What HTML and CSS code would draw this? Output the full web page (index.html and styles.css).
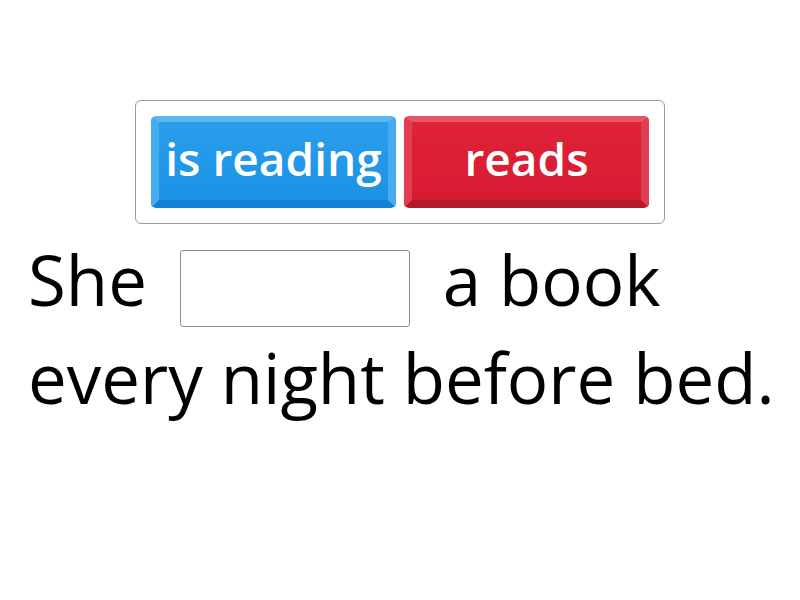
FILE: index.html
```html
<!DOCTYPE html>
<html lang="en">
<head>
<meta charset="utf-8">
<title>Fill in the gap</title>
<link rel="stylesheet" href="styles.css">
</head>
<body>
<main class="quiz">
  <div class="choices">
    <button class="tile tile-blue">is reading</button>
    <button class="tile tile-red">reads</button>
  </div>
  <p class="sentence">She <span class="gap"></span> a book every night before bed.</p>
</main>
</body>
</html>
```

FILE: styles.css
```css
html, body {
  margin: 0;
  padding: 0;
  background: #ffffff;
}

body {
  width: 800px;
  height: 600px;
  overflow: hidden;
  font-family: "Open Sans", "Noto Sans", sans-serif;
  color: #000000;
}

.quiz {
  display: flex;
  flex-direction: column;
  align-items: center;
  padding-top: 100px;
}

.choices {
  display: flex;
  gap: 8px;
  padding: 15px;
  border: 1px solid #9a9a9a;
  border-radius: 6px;
}

.tile {
  width: 245px;
  height: 92px;
  box-sizing: border-box;
  border-style: solid;
  border-width: 6px 8px 8px 8px;
  border-radius: 5px;
  font-family: "Open Sans", "Noto Sans", sans-serif;
  font-weight: 600;
  font-size: 46px;
  color: #ffffff;
  padding: 0 0 6px 0;
  display: flex;
  align-items: center;
  justify-content: center;
  line-height: 1;
  white-space: nowrap;
}

.tile-blue {
  background: linear-gradient(#2a9eec, #1b92e4);
  border-color: #5cb7f2 #46acef #1282d6 #46acef;
}

.tile-red {
  background: linear-gradient(#de2238, #d61c33);
  border-color: #e6566a #e23d51 #b41a2c #e23d51;
}

.sentence {
  align-self: stretch;
  margin: 6px 0 0 0;
  padding: 0 20px 0 28px;
  font-size: 69px;
  line-height: 98px;
  font-weight: 400;
}

.gap {
  display: inline-block;
  width: 230px;
  height: 77px;
  box-sizing: border-box;
  border: 1px solid #8f8f8f;
  border-radius: 3px;
  margin: 0 15px;
  vertical-align: -21px;
}
```
